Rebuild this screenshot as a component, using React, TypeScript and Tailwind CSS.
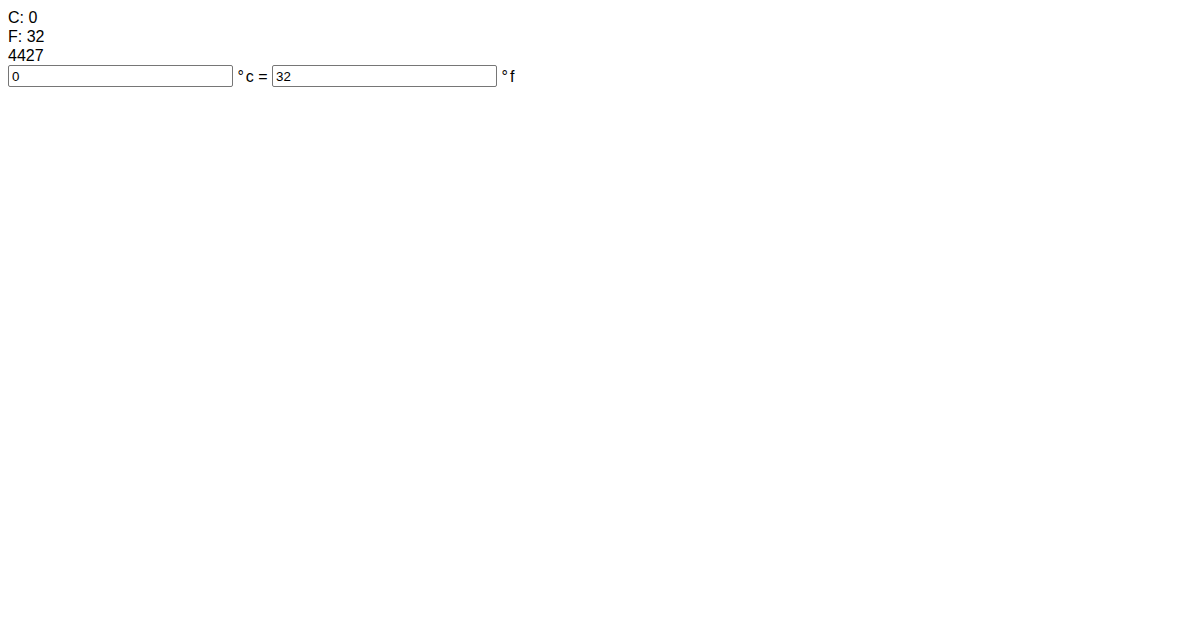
import React, { useState } from "react";

export default function App() {
  const [c, setC] = useState("0");
  const [f, setF] = useState("32");
  return (
    <div className="p-2 text-[16px] leading-[19px] text-black bg-white font-['Liberation_Sans',Arial,sans-serif]">
      <div>C: {c}</div>
      <div>F: {f}</div>
      <div>4427</div>
      <div className="flex items-center h-[22px] whitespace-pre">
        <input
          className="w-[225px] h-[22px] border border-[#767676] rounded-[2px] px-[3px] text-[13.33px] outline-none font-['Liberation_Sans',Arial,sans-serif]"
          value={c}
          onChange={(e) => setC(e.target.value)}
        />
        <span> °</span>
        <span className="ml-[2px]">c = </span>
        <input
          className="w-[225px] h-[22px] border border-[#767676] rounded-[2px] px-[3px] text-[13.33px] outline-none font-['Liberation_Sans',Arial,sans-serif]"
          value={f}
          onChange={(e) => setF(e.target.value)}
        />
        <span> °</span>
        <span className="ml-[2px]">f</span>
      </div>
    </div>
  );
}
